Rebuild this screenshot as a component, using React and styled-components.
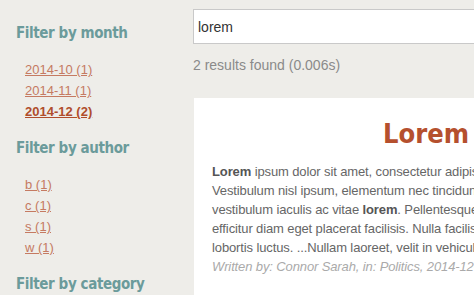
import React from 'react';
import styled, { createGlobalStyle } from 'styled-components';

const GlobalStyle = createGlobalStyle`
  html, body {
    margin: 0;
    padding: 0;
    overflow: hidden;
    background: #eeede9;
  }
`;

const months = [
  { label: '2014-10 (1)' },
  { label: '2014-11 (1)' },
  { label: '2014-12 (2)', active: true },
];

const authors = ['b (1)', 'c (1)', 's (1)', 'w (1)'];

const Page = styled.div`
  display: grid;
  grid-template-columns: 193px 1fr;
  width: 474px;
  height: 295px;
  overflow: hidden;
  font-family: 'Liberation Sans', Arial, sans-serif;
`;

const Sidebar = styled.aside`
  padding: 23px 0 0 16px;
`;

const FilterTitle = styled.h3`
  margin: 0 0 16px;
  font-family: 'DejaVu Sans', Tahoma, sans-serif;
  font-stretch: condensed;
  font-size: 15px;
  line-height: 20px;
  letter-spacing: -0.4px;
  font-weight: bold;
  color: #6b9b9b;
  white-space: nowrap;
`;

const FilterList = styled.ul`
  list-style: none;
  margin: 0 0 16px;
  padding: 0 0 0 9px;
`;

const FilterItem = styled.li`
  font-size: 13px;
  line-height: 21px;
`;

const FilterLink = styled.a`
  color: ${props => props.active ? '#b04d2c' : '#c57a62'};
  font-weight: ${props => props.active ? 'bold' : 'normal'};
  text-decoration: underline;
`;

const Main = styled.main`
  padding: 9px 0 0 0;
  min-width: 0;
`;

const SearchInput = styled.input`
  box-sizing: border-box;
  display: block;
  width: 420px;
  height: 35px;
  margin: 0;
  padding: 0 4px;
  border: 1px solid #c9c9c9;
  background: #fff;
  font-family: inherit;
  font-size: 14px;
  color: #333;
  outline: none;
`;

const ResultCount = styled.div`
  margin-top: 12px;
  font-size: 14px;
  line-height: 18px;
  color: #8a8a8a;
`;

const ResultCard = styled.article`
  margin: 24px 0 0 1px;
  width: 464px;
  padding: 20px 18px 20px;
  background: #fff;
  box-sizing: border-box;
`;

const ResultTitle = styled.h2`
  margin: 0 0 12px;
  text-align: center;
  font-family: 'DejaVu Sans', Tahoma, sans-serif;
  font-stretch: condensed;
  font-size: 27px;
  line-height: 32px;
  font-weight: bold;
  color: #b5502e;
`;

const Excerpt = styled.p`
  margin: 0;
  font-size: 13px;
  line-height: 19px;
  letter-spacing: -0.12px;
  color: #666;
  white-space: nowrap;

  b {
    color: #555;
  }
`;

const Meta = styled.p`
  margin: 0;
  font-size: 13px;
  line-height: 19px;
  letter-spacing: -0.12px;
  font-style: italic;
  color: #aaa;
  white-space: nowrap;
`;

export default function App() {
  return (
    <>
      <GlobalStyle />
      <Page>
        <Sidebar>
          <FilterTitle>Filter by month</FilterTitle>
          <FilterList>
            {months.map(m => (
              <FilterItem key={m.label}>
                <FilterLink href="#" active={m.active ? 1 : 0}>{m.label}</FilterLink>
              </FilterItem>
            ))}
          </FilterList>
          <FilterTitle>Filter by author</FilterTitle>
          <FilterList>
            {authors.map(a => (
              <FilterItem key={a}>
                <FilterLink href="#">{a}</FilterLink>
              </FilterItem>
            ))}
          </FilterList>
          <FilterTitle>Filter by category</FilterTitle>
        </Sidebar>
        <Main>
          <SearchInput defaultValue="lorem" />
          <ResultCount>2 results found (0.006s)</ResultCount>
          <ResultCard>
            <ResultTitle>Lorem</ResultTitle>
            <Excerpt>
              <b>Lorem</b> ipsum dolor sit amet, consectetur adipiscing elit.<br />
              Vestibulum nisl ipsum, elementum nec tincidunt ut, rhoncus<br />
              vestibulum iaculis ac vitae <b>lorem</b>. Pellentesque habitant<br />
              efficitur diam eget placerat facilisis. Nulla facilisi. Donec<br />
              lobortis luctus. ...Nullam laoreet, velit in vehicula
            </Excerpt>
            <Meta>Written by: Connor Sarah, in: Politics, 2014-12-05</Meta>
          </ResultCard>
        </Main>
      </Page>
    </>
  );
}
